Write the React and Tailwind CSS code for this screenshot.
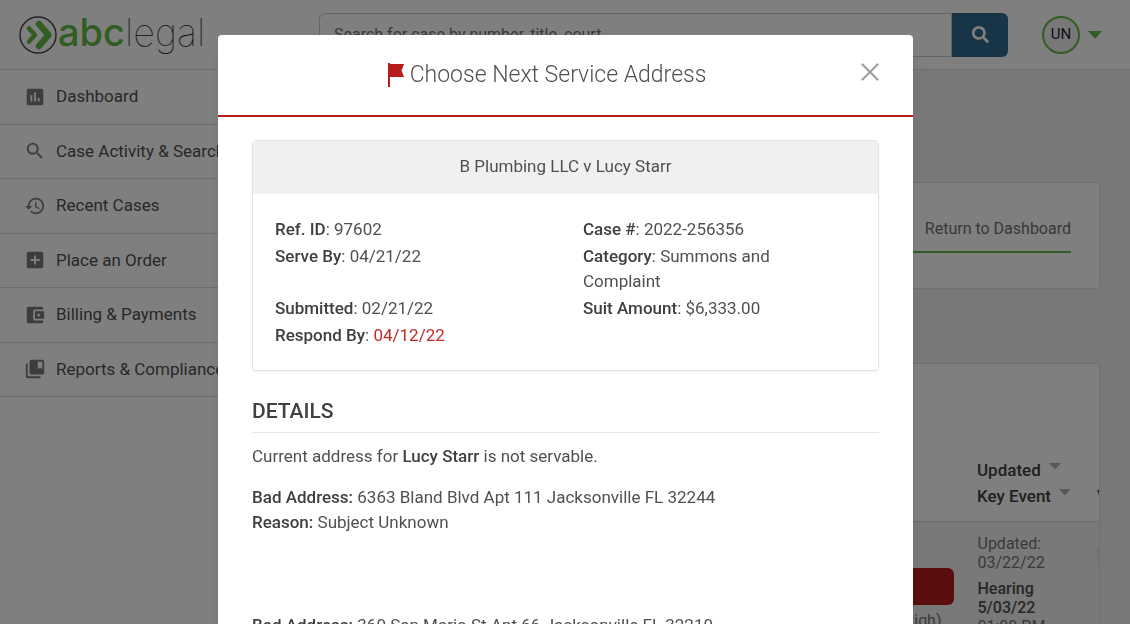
import { FaSearch } from "react-icons/fa";
import {
  MdSearch,
  MdHistory,
  MdAddBox,
  MdAccountBalanceWallet,
  MdCollectionsBookmark,
  MdInsertChart,
} from "react-icons/md";

const navItems = [
  { label: "Dashboard", icon: MdInsertChart },
  { label: "Case Activity & Search", icon: MdSearch },
  { label: "Recent Cases", icon: MdHistory },
  { label: "Place an Order", icon: MdAddBox },
  { label: "Billing & Payments", icon: MdAccountBalanceWallet },
  { label: "Reports & Compliance", icon: MdCollectionsBookmark },
];

const badAddresses = [
  {
    address: "6363 Bland Blvd Apt 111 Jacksonville FL 32244",
    reason: "Subject Unknown",
  },
  {
    address: "360 San Mario St Apt 66 Jacksonville FL 32210",
    reason: "Subject Unknown",
  },
];

function Logo() {
  return (
    <a href="#" className="flex items-start" aria-label="abclegal home">
      <svg width="40" height="40" viewBox="0 0 40 40" fill="none">
        <circle cx="20" cy="20" r="18" stroke="#4a4a4f" strokeWidth="1.5" />
        <path
          d="M11 13.5l6 6.500-6 6.500"
          stroke="#63b944"
          strokeWidth="4.5"
          strokeLinecap="round"
          strokeLinejoin="round"
        />
        <path
          d="M21 9l9.500 11-9.500 11"
          stroke="#63b944"
          strokeWidth="6.5"
          strokeLinecap="round"
          strokeLinejoin="round"
        />
      </svg>
      <span className="font-['Inter',sans-serif] text-[38px] leading-[34px] font-medium text-[#63b944]">
        abc
      </span>
      <span className="font-['Inter',sans-serif] text-[38px] leading-[34px] font-thin text-[#2a2a30]">
        legal
      </span>
    </a>
  );
}

function Header() {
  return (
    <header className="flex h-[70px] shrink-0 items-center border-b border-[#dcdcdc] bg-white pr-7 pl-[18px]">
      <div className="w-[301px] shrink-0">
        <Logo />
      </div>
      <form className="flex h-11 flex-1">
        <input
          type="text"
          aria-label="Search for case"
          placeholder="Search for case by number, title, court"
          className="min-w-0 flex-1 rounded-l-md border border-[#c8c8c8] px-3.5 text-base placeholder:text-[#757575]"
        />
        <button
          type="button"
          aria-label="Search"
          className="flex w-14 items-center justify-center rounded-r-md bg-[#31698f] text-white"
        >
          <FaSearch size={17} />
        </button>
      </form>
      <button type="button" className="ml-[34px] flex items-center gap-2">
        <span className="flex h-[38px] w-[38px] items-center justify-center rounded-full border-2 border-[#63b944] bg-[#f0f0f0] text-[15px] text-[#202030]">
          UN
        </span>
        <svg width="14" height="8" viewBox="0 0 14 8" fill="#63b944">
          <path d="M0 0h14L7 8z" />
        </svg>
      </button>
    </header>
  );
}

function Sidebar() {
  return (
    <nav className="w-[250px] shrink-0 bg-white">
      <ul className="grid h-[327px] auto-rows-fr">
        {navItems.map(({ label, icon: Icon }) => (
          <li key={label} className="border-b border-[#dcdcdc]">
            <a
              href="#"
              className="flex h-full items-center gap-2.5 pl-6 text-[17px] whitespace-nowrap text-[#505050]"
            >
              <Icon size={22} className="shrink-0 text-[#7a7a7a]" />
              {label}
            </a>
          </li>
        ))}
      </ul>
    </nav>
  );
}

function SortLabel({ children }) {
  return (
    <span className="flex h-[26px] gap-2">
      {children}
      <svg width="12" height="18" viewBox="0 0 12 18" fill="#b0b0b0">
        <path d="M0 6h12L6 12.500z" />
      </svg>
    </span>
  );
}

function CaseTable() {
  return (
    <table className="w-[calc(100%+106px)] table-fixed text-left text-[17px] leading-[26px]">
      <colgroup>
        <col />
        <col className="w-[120px]" />
        <col className="w-[120px]" />
      </colgroup>
      <thead>
        <tr className="h-[157px] border-b border-[#d5d5d5] align-bottom">
          <th className="font-medium" />
          <th className="pb-3 pl-3 font-medium text-[#404040]">
            <SortLabel>Updated</SortLabel>
            <SortLabel>Key Event</SortLabel>
          </th>
          <th className="pb-3 pl-3 font-medium text-[#404040]">View</th>
        </tr>
      </thead>
      <tbody>
        <tr className="bg-[#f2f2f2] align-top text-base leading-[19px] text-[#757575]">
          <td className="border-r border-[#ececec] pt-[46px] pr-[11px] text-right">
            <button
              type="button"
              className="h-[37px] w-[150px] rounded-md bg-[#b71c1c] text-white"
            >
              Action
            </button>
            <p className="pt-1 pr-3 leading-6">(High)</p>
          </td>
          <td className="pt-3 pr-8 pl-3">
            <p className="pb-[7px]">Updated: 03/22/22</p>
            <p className="font-medium text-[#505050]">Hearing 5/03/22</p>
            <p>01:00 PM</p>
          </td>
          <td className="pt-[17px] pl-3">
            <button
              type="button"
              aria-label="View case"
              className="h-8 w-8 rounded-full border border-[#cccccc] bg-white"
            />
          </td>
        </tr>
      </tbody>
    </table>
  );
}

function Page() {
  return (
    <div className="flex h-full flex-col">
      <Header />
      <div className="flex min-h-0 flex-1">
        <Sidebar />
        <main className="min-w-0 flex-1 bg-[#f0f0f0] pt-28 pr-[30px] pl-[30px]">
          <section className="flex h-[107px] items-start justify-end rounded-sm border border-[#e0e0e0] bg-white pt-6 pr-[28px]">
            <a
              href="#"
              className="border-b-2 border-[#63b944] pt-[9px] pb-[9px] pl-10 text-base leading-[26px] text-[#707070]"
            >
              Return to Dashboard
            </a>
          </section>
          <section className="mt-[74px] overflow-hidden rounded-sm border border-[#e0e0e0] bg-white">
            <CaseTable />
          </section>
        </main>
      </div>
    </div>
  );
}

function Field({ label, value, alert }) {
  return (
    <div className="pr-16">
      <dt className="inline font-medium text-[#404040]">{label}</dt>:{" "}
      <dd className={alert ? "inline text-[#c62828]" : "inline"}>{value}</dd>
    </div>
  );
}

function CaseCard() {
  return (
    <section className="rounded-sm border border-[#e2e2e2] shadow-xs">
      <h3 className="bg-[#f0f0f0] pt-[13px] pb-[15px] text-center">
        B Plumbing LLC v Lucy Starr
      </h3>
      <dl className="grid grid-cols-[308px_1fr] gap-y-0.5 px-[22px] pt-[23px] pb-[22px]">
        <Field label="Ref. ID" value="97602" />
        <Field label="Case #" value="2022-256356" />
        <Field label="Serve By" value="04/21/22" />
        <Field label="Category" value="Summons and Complaint" />
        <Field label="Submitted" value="02/21/22" />
        <Field label="Suit Amount" value="$6,333.00" />
        <Field label="Respond By" value="04/12/22" alert />
      </dl>
    </section>
  );
}

function AddressModal() {
  return (
    <div className="fixed inset-0 overflow-hidden bg-black/50 pt-[35px] pl-px">
      <div
        role="dialog"
        aria-labelledby="modal-title"
        className="mx-auto min-h-screen max-w-[695px] rounded bg-white text-[17px] leading-[25px] text-[#505050] shadow-lg"
      >
        <div className="flex items-start border-b-2 border-[#b71c1c] px-[34px] py-6">
          <h2
            id="modal-title"
            className="flex flex-1 items-center justify-center gap-1.5 text-[23px] leading-8 font-light"
          >
            <svg width="16" height="24" viewBox="0 0 16 24" fill="#b71c1c">
              <path d="M0 0h2v1h14l-2.500 6.500L16 14H2v10H0z" />
            </svg>
            Choose Next Service Address
          </h2>
          <button
            type="button"
            aria-label="Close"
            className="flex h-[26px] w-[37px] items-center justify-end text-[#a0a0a0]"
          >
            <svg
              width="18"
              height="18"
              viewBox="0 0 18 18"
              stroke="currentColor"
              strokeWidth="2.2"
              strokeLinecap="round"
            >
              <path d="M1.500 1.500l15 15M16.500 1.500l-15 15" />
            </svg>
          </button>
        </div>
        <div className="px-[34px] pt-[23px]">
          <CaseCard />
          <h3 className="mt-[26px] border-b border-[#e4e4ea] pb-[7px] text-[21px] leading-7 font-medium text-[#404040]">
            DETAILS
          </h3>
          <p className="mt-[11px] mb-4">
            Current address for{" "}
            <strong className="font-medium text-[#404040]">Lucy Starr</strong>{" "}
            is not servable.
          </p>
          {badAddresses.map(({ address, reason }) => (
            <div key={address} className="mb-[78px]">
              <p>
                <strong className="font-medium text-[#404040]">
                  Bad Address:
                </strong>{" "}
                {address}
              </p>
              <p>
                <strong className="font-medium text-[#404040]">Reason:</strong>{" "}
                {reason}
              </p>
            </div>
          ))}
        </div>
      </div>
    </div>
  );
}

export default function App() {
  return (
    <div className="h-screen overflow-hidden bg-white font-['Roboto',sans-serif]">
      <Page />
      <AddressModal />
    </div>
  );
}
